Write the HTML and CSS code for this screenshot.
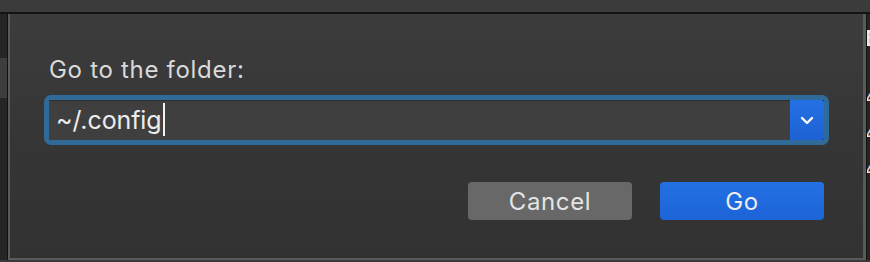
FILE: index.html
```html
<!DOCTYPE html>
<html>
<head>
  <title>Go to the folder</title>
  <link rel="stylesheet" href="styles.css">
</head>
<body>
  <div class="titlebar"></div>

  <div class="main">
    <!-- window behind, left edge -->
    <div class="edge edge-left">
      <div class="edge-gap"></div>
      <div class="edge-band"></div>
    </div>

    <!-- the sheet -->
    <div class="sheet">
      <div class="sheet-label">Go to the folder:</div>

      <div class="path-ring">
        <div class="path-field">
          <div class="path-text">~/.config<span class="caret"></span></div>
          <button class="path-menu" type="button">
            <svg width="14" height="9" viewBox="0 0 14 9">
              <path d="M2 2 L7 7 L12 2" fill="none" stroke="#fff" stroke-width="2.4" stroke-linecap="round" stroke-linejoin="round"/>
            </svg>
          </button>
        </div>
      </div>

      <div class="sheet-buttons">
        <button class="btn btn-cancel" type="button">Cancel</button>
        <button class="btn btn-go" type="button">Go</button>
      </div>
    </div>

    <!-- window behind, right edge: only the start of its labels shows -->
    <div class="edge edge-right">
      <span class="peek peek-top">B</span>
      <span class="peek">4</span>
      <span class="peek">4</span>
      <span class="peek">4</span>
    </div>
  </div>
</body>
</html>
```

FILE: styles.css
```css
body {
  margin: 0;
  width: 870px;
  height: 262px;
  overflow: hidden;
  background: #3a3a3a;
  font-family: "Inter", "Liberation Sans", sans-serif;
  color: #dcdcdc;
}

.titlebar {
  height: 12px;
  background: #3b3b3b;
  border-bottom: 2px solid #141414;
}

.main {
  display: flex;
  height: 246px;
}

.edge {
  background: #252525;
  display: flex;
  flex-direction: column;
  overflow: hidden;
}

.edge-left {
  width: 7px;
  border-right: 1px solid #121212;
}

.edge-gap {
  height: 44px;
}

.edge-band {
  height: 40px;
  background: #3d3d3d;
}

.edge-right {
  width: 3px;
  border-left: 1px solid #121212;
  padding-top: 12px;
}

.peek {
  display: block;
  margin-left: -2px;
  color: #e8e8e8;
  font-size: 18px;
  line-height: 36px;
}

.peek-top {
  font-weight: bold;
  font-size: 22px;
  line-height: 24px;
  margin-bottom: 30px;
}

.sheet {
  flex: 1;
  padding: 0 39px;
  background: linear-gradient(180deg, #3c3c3d 0%, #353535 55%, #323232 100%);
  border-left: 2px solid #5a5a5a;
  border-right: 3px solid #5a5a5a;
  border-bottom: 2px solid #5a5a5a;
}

.sheet-label {
  margin-top: 41px;
  font-size: 24px;
  line-height: 29px;
  letter-spacing: 0.7px;
  color: #d9d9d9;
}

.path-ring {
  margin: 11px -5px 0;
  padding: 5px;
  height: 40px;
  border-radius: 7px;
  background: #306a99;
}

.path-field {
  display: flex;
  height: 40px;
  background: #3f3f3f;
  border-top: 1px solid #2e2e2e;
  box-sizing: border-box;
}

.path-text {
  flex: 1;
  padding-left: 7px;
  font-size: 25px;
  line-height: 39px;
  letter-spacing: -0.1px;
  color: #ececec;
}

.caret {
  display: inline-block;
  width: 2px;
  height: 33px;
  margin-left: 1px;
  background: #f2f2f2;
  vertical-align: -7px;
}

.path-menu {
  width: 34px;
  border: none;
  padding: 0;
  margin-top: -1px;
  border-radius: 0 3px 3px 0;
  background: linear-gradient(180deg, #2470e4, #1d62d4);
  display: flex;
  align-items: center;
  justify-content: center;
}

.sheet-buttons {
  display: flex;
  justify-content: flex-end;
  gap: 28px;
  margin-top: 37px;
}

.btn {
  width: 164px;
  height: 38px;
  border: none;
  border-radius: 4px;
  font-family: "Inter", "Liberation Sans", sans-serif;
  font-size: 24px;
  letter-spacing: 0.6px;
  color: #e4e4e4;
}

.btn-cancel {
  background: #686868;
}

.btn-go {
  background: linear-gradient(180deg, #2371e5, #1c63d6);
  color: #ececec;
}
```
